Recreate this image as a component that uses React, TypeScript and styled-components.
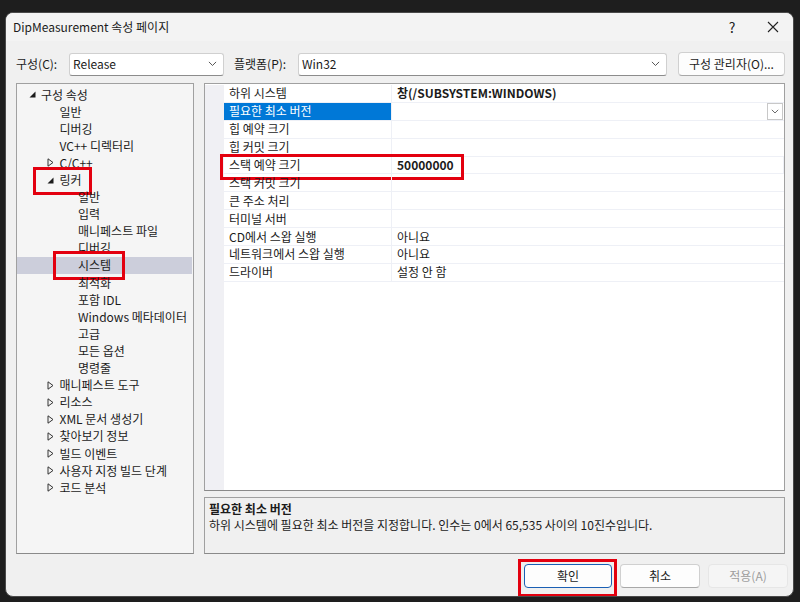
import React, { FC } from 'react';
import styled, { createGlobalStyle } from 'styled-components';

const GlobalStyle = createGlobalStyle`
  html, body {
    margin: 0;
    padding: 0;
    background: #1e1e1e;
    overflow: hidden;
  }
  * {
    box-sizing: border-box;
  }
`;

const FONT = `"Noto Sans CJK KR", "Noto Sans", sans-serif`;
const RED = '#e3000f';

const SScreen = styled.div`
  width: 800px;
  height: 602px;
  padding: 12px 6px 5px 5px;
  font-family: ${FONT};
  font-size: 12px;
  color: #1b1b1b;
`;

const SDialog = styled.div`
  width: 789px;
  height: 585px;
  background: #f0f0f0;
  border: 1px solid #4a4a4a;
  border-radius: 8px;
  overflow: hidden;
  display: flex;
  flex-direction: column;
`;

const STitleBar = styled.div`
  height: 28px;
  background: #f3f3f3;
  display: flex;
  align-items: center;
  padding-left: 7px;
  padding-right: 2px;
`;

const STitle = styled.div`
  flex: 1;
  line-height: 16px;
`;

const STitleButton = styled.div<{ width: number }>`
  width: ${(p) => p.width}px;
  height: 28px;
  display: flex;
  align-items: center;
  justify-content: center;
  font-size: 14px;
  color: #222;
`;

const SBody = styled.div`
  flex: 1;
  display: flex;
  flex-direction: column;
  padding: 12px 8px 0 10px;
`;

const SConfigRow = styled.div`
  display: flex;
  align-items: center;
  height: 22px;
`;

const SLabel = styled.span<{ width: number }>`
  width: ${(p) => p.width}px;
  line-height: 16px;
`;

const SSelect = styled.div<{ width: number }>`
  width: ${(p) => p.width}px;
  height: 23px;
  background: #ffffff;
  border: 1px solid #d0d0d0;
  border-bottom-color: #8c8c8c;
  border-radius: 3px;
  display: flex;
  align-items: center;
  padding: 0 6px 0 3px;
  line-height: 16px;
  margin-right: 10px;
`;

const SSelectText = styled.span`
  flex: 1;
`;

const SPushButton = styled.div<{ width: number; disabled?: boolean; primary?: boolean }>`
  width: ${(p) => p.width}px;
  height: 24px;
  background: ${(p) => (p.disabled ? '#f5f5f5' : '#fdfdfd')};
  border: 1px solid ${(p) => (p.primary ? '#1a5fb4' : p.disabled ? '#e6e6e6' : '#d0d0d0')};
  border-bottom-color: ${(p) => (p.primary ? '#1a5fb4' : p.disabled ? '#e6e6e6' : '#a8a8a8')};
  border-radius: 4px;
  display: flex;
  align-items: center;
  justify-content: center;
  line-height: 16px;
  color: ${(p) => (p.disabled ? '#9d9d9d' : '#1b1b1b')};
`;

const SMain = styled.div`
  margin-top: 8px;
  display: grid;
  grid-template-columns: 178px 1fr;
  column-gap: 10px;
  height: 471px;
`;

const STree = styled.div`
  background: #f5f5f5;
  border: 1px solid #a0a0a0;
  border-bottom-color: #8a8a8a;
  padding-top: 2px;
`;

const STreeRow = styled.div<{ level: number; selected?: boolean }>`
  position: relative;
  height: 17.1px;
  display: flex;
  align-items: center;
  padding-left: ${(p) => 24 + p.level * 18.5}px;
  background: ${(p) => (p.selected ? '#cccedb' : 'transparent')};
  margin-right: 1px;
  line-height: 16px;
  white-space: nowrap;
`;

const SExpander = styled.span`
  position: absolute;
  margin-left: -13px;
  width: 8px;
  height: 8px;
  display: flex;
  align-items: center;
  justify-content: center;
`;

const SHighlight = styled.span<{ left: number; width: number; top: number; height: number }>`
  position: absolute;
  left: ${(p) => p.left}px;
  top: ${(p) => p.top}px;
  width: ${(p) => p.width}px;
  height: ${(p) => p.height}px;
  border: 3px solid ${RED};
  pointer-events: none;
`;

const SRightColumn = styled.div`
  display: flex;
  flex-direction: column;
  gap: 6px;
`;

const SGrid = styled.div`
  flex: 1;
  background: #ffffff;
  border: 1px solid #a0a0a0;
  border-bottom-color: #8a8a8a;
  padding-top: 1px;
  display: flex;
`;

const SGutter = styled.div`
  width: 19px;
  background: #f0f0f4;
`;

const SRows = styled.div`
  flex: 1;
`;

const SPropRow = styled.div`
  position: relative;
  height: 17.9px;
  display: grid;
  grid-template-columns: 168px 1fr;
  border-bottom: 1px solid #eef0f6;
`;

const SPropCell = styled.div<{ selected?: boolean; bold?: boolean }>`
  display: flex;
  align-items: center;
  padding-left: 5px;
  line-height: 16px;
  white-space: nowrap;
  font-weight: ${(p) => (p.bold ? 700 : 400)};
  background: ${(p) => (p.selected ? '#0078d7' : 'transparent')};
  color: ${(p) => (p.selected ? '#ffffff' : '#1b1b1b')};
  border-right: 1px solid #eef0f6;
  &:last-child {
    border-right: none;
    padding-right: 1px;
  }
`;

const SCellDrop = styled.div`
  margin-left: auto;
  width: 16px;
  height: 17px;
  border: 1px solid #c8c8c8;
  background: #fff;
  display: flex;
  align-items: center;
  justify-content: center;
`;

const SDescription = styled.div`
  height: 57px;
  border: 1px solid #a0a0a0;
  border-bottom-color: #8a8a8a;
  background: #f0f0f0;
  padding: 3px 4px;
  line-height: 16px;
`;

const SDescTitle = styled.div`
  font-weight: 700;
`;

const SButtonRow = styled.div`
  display: flex;
  justify-content: flex-end;
  gap: 8px;
  padding-top: 10px;
  margin-right: -3px;
`;

const SButtonWrap = styled.div`
  position: relative;
`;

const Chevron: FC<{ size?: number }> = ({ size = 9 }) => (
  <svg width={size} height={size * 0.6} viewBox="0 0 10 6">
    <path d="M1 1 L5 5 L9 1" fill="none" stroke="#444" strokeWidth="1" />
  </svg>
);

const OpenArrow: FC = () => (
  <svg width="7" height="7" viewBox="0 0 7 7">
    <path d="M6.5 0.5 L6.5 6.5 L0.5 6.5 Z" fill="#1b1b1b" />
  </svg>
);

const ClosedArrow: FC = () => (
  <svg width="7" height="9" viewBox="0 0 7 9">
    <path d="M1 0.8 L6 4.5 L1 8.2 Z" fill="none" stroke="#333" strokeWidth="1" />
  </svg>
);

const CloseIcon: FC = () => (
  <svg width="12" height="12" viewBox="0 0 12 12">
    <path d="M1 1 L11 11 M11 1 L1 11" stroke="#222" strokeWidth="1.1" />
  </svg>
);

interface ITreeItem {
  label: string;
  level: number;
  expander?: 'open' | 'closed';
  selected?: boolean;
  mark?: { left: number; width: number; top: number; height: number };
}

const treeItems: ITreeItem[] = [
  { label: '구성 속성', level: 0, expander: 'open' },
  { label: '일반', level: 1 },
  { label: '디버깅', level: 1 },
  { label: 'VC++ 디렉터리', level: 1 },
  { label: 'C/C++', level: 1, expander: 'closed' },
  { label: '링커', level: 1, expander: 'open', mark: { left: 16, width: 59, top: -4, height: 28 } },
  { label: '일반', level: 2 },
  { label: '입력', level: 2 },
  { label: '매니페스트 파일', level: 2 },
  { label: '디버깅', level: 2 },
  { label: '시스템', level: 2, selected: true, mark: { left: 36, width: 72, top: -6, height: 29 } },
  { label: '최적화', level: 2 },
  { label: '포함 IDL', level: 2 },
  { label: 'Windows 메타데이터', level: 2 },
  { label: '고급', level: 2 },
  { label: '모든 옵션', level: 2 },
  { label: '명령줄', level: 2 },
  { label: '매니페스트 도구', level: 1, expander: 'closed' },
  { label: '리소스', level: 1, expander: 'closed' },
  { label: 'XML 문서 생성기', level: 1, expander: 'closed' },
  { label: '찾아보기 정보', level: 1, expander: 'closed' },
  { label: '빌드 이벤트', level: 1, expander: 'closed' },
  { label: '사용자 지정 빌드 단계', level: 1, expander: 'closed' },
  { label: '코드 분석', level: 1, expander: 'closed' },
];

interface IProp {
  name: string;
  value?: string;
  bold?: boolean;
  selected?: boolean;
  marked?: boolean;
}

const props: IProp[] = [
  { name: '하위 시스템', value: '창(/SUBSYSTEM:WINDOWS)', bold: true },
  { name: '필요한 최소 버전', selected: true },
  { name: '힙 예약 크기' },
  { name: '힙 커밋 크기' },
  { name: '스택 예약 크기', value: '50000000', bold: true, marked: true },
  { name: '스택 커밋 크기' },
  { name: '큰 주소 처리' },
  { name: '터미널 서버' },
  { name: 'CD에서 스왑 실행', value: '아니요' },
  { name: '네트워크에서 스왑 실행', value: '아니요' },
  { name: '드라이버', value: '설정 안 함' },
];

const App: FC = () => {
  return (
    <SScreen>
      <GlobalStyle />
      <SDialog>
        <STitleBar>
          <STitle>DipMeasurement 속성 페이지</STitle>
          <STitleButton width={46}>?</STitleButton>
          <STitleButton width={36}>
            <CloseIcon />
          </STitleButton>
        </STitleBar>
        <SBody>
          <SConfigRow>
            <SLabel width={53}>구성(C):</SLabel>
            <SSelect width={155}>
              <SSelectText>Release</SSelectText>
              <Chevron />
            </SSelect>
            <SLabel width={64}>플랫폼(P):</SLabel>
            <SSelect width={369}>
              <SSelectText>Win32</SSelectText>
              <Chevron />
            </SSelect>
            <SPushButton width={107} style={{ marginLeft: 1 }}>
              구성 관리자(O)...
            </SPushButton>
          </SConfigRow>
          <SMain>
            <STree>
              {treeItems.map((item, i) => (
                <STreeRow key={i} level={item.level} selected={item.selected}>
                  {item.expander && (
                    <SExpander>{item.expander === 'open' ? <OpenArrow /> : <ClosedArrow />}</SExpander>
                  )}
                  {item.label}
                  {item.mark && <SHighlight {...item.mark} />}
                </STreeRow>
              ))}
            </STree>
            <SRightColumn>
              <SGrid>
                <SGutter />
                <SRows>
                  {props.map((p, i) => (
                    <SPropRow key={i}>
                      <SPropCell selected={p.selected}>{p.name}</SPropCell>
                      <SPropCell bold={p.bold}>
                        {p.value}
                        {p.selected && (
                          <SCellDrop>
                            <Chevron size={8} />
                          </SCellDrop>
                        )}
                      </SPropCell>
                      {p.marked && <SHighlight left={-4} width={244} top={-3} height={26} />}
                    </SPropRow>
                  ))}
                </SRows>
              </SGrid>
              <SDescription>
                <SDescTitle>필요한 최소 버전</SDescTitle>
                <div>하위 시스템에 필요한 최소 버전을 지정합니다. 인수는 0에서 65,535 사이의 10진수입니다.</div>
              </SDescription>
            </SRightColumn>
          </SMain>
          <SButtonRow>
            <SButtonWrap>
              <SPushButton width={88} primary>
                확인
              </SPushButton>
              <SHighlight left={-6} width={99} top={-5} height={38} />
            </SButtonWrap>
            <SPushButton width={80}>취소</SPushButton>
            <SPushButton width={80} disabled>
              적용(A)
            </SPushButton>
          </SButtonRow>
        </SBody>
      </SDialog>
    </SScreen>
  );
};

export default App;
